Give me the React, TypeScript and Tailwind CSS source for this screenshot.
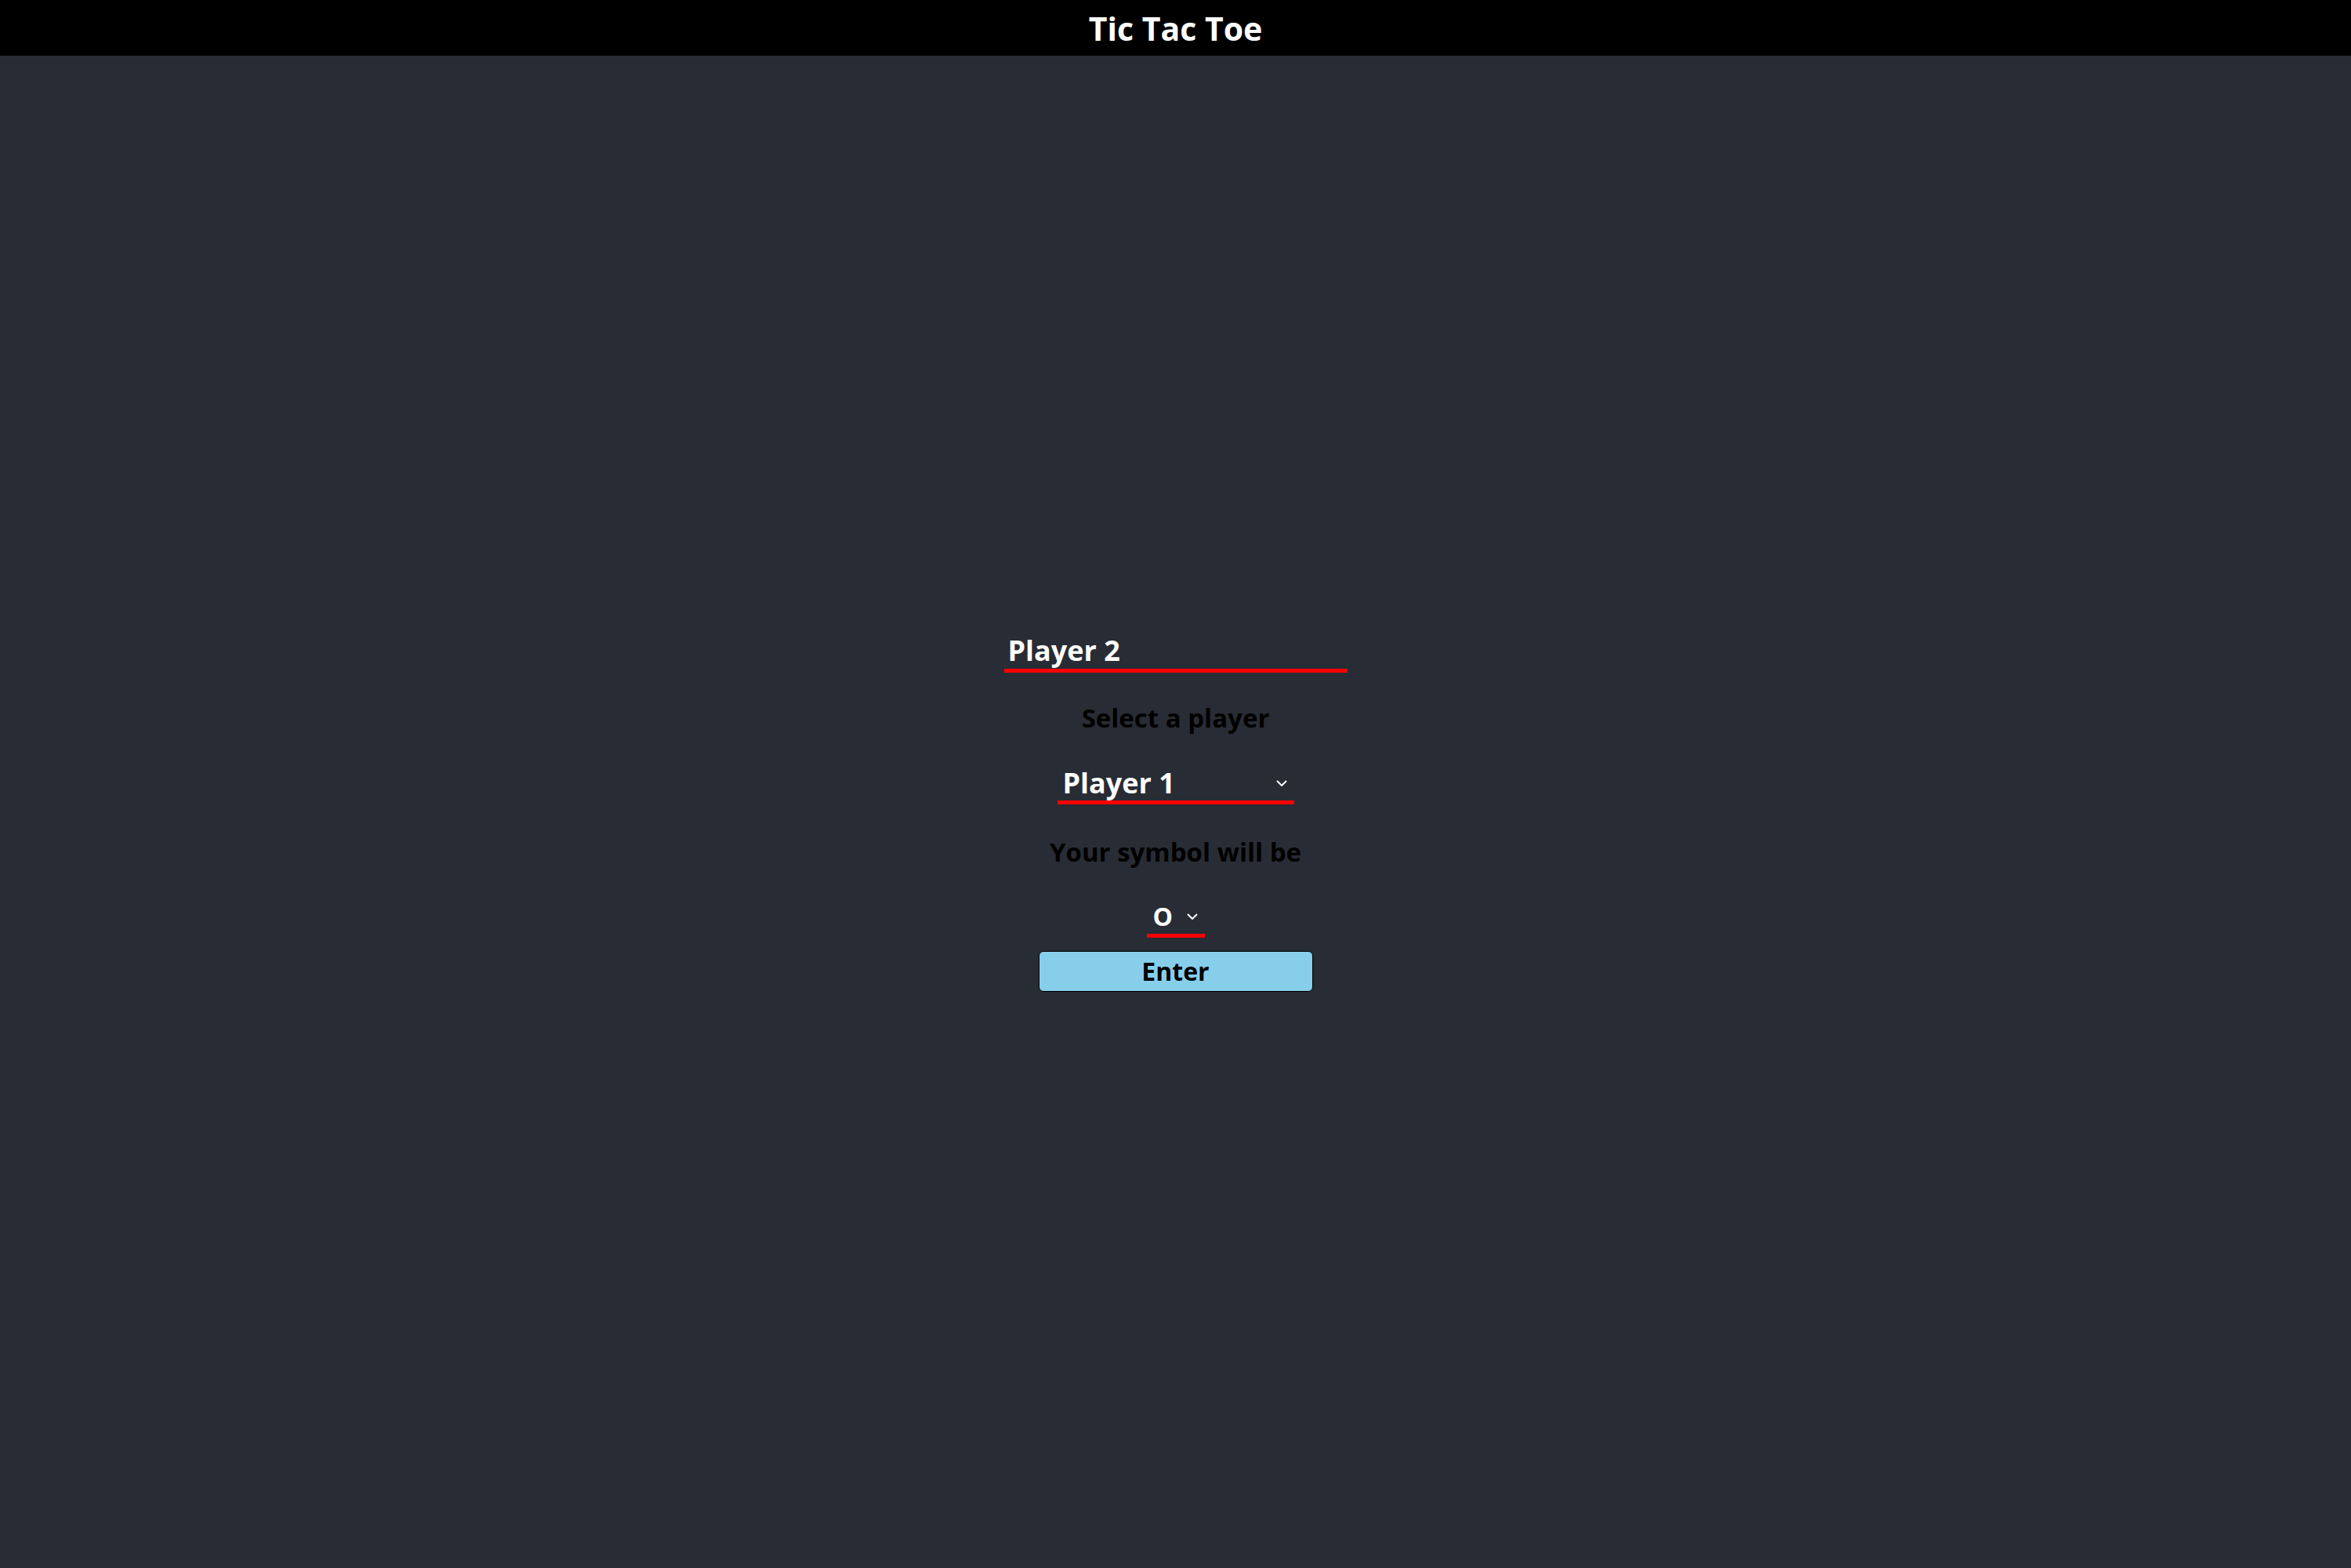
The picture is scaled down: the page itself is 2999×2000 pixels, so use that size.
import React, { useState } from "react";

const font = { fontFamily: '"Open Sans", "Noto Sans", sans-serif' };

const Chevron = () => (
  <svg
    viewBox="0 0 14 8"
    className="pointer-events-none absolute right-[9px] top-[19px] h-[8px] w-[14px]"
    fill="none"
    stroke="white"
    strokeWidth="2"
  >
    <path d="M1 1l6 6 6-6" />
  </svg>
);

export default function App() {
  const [name, setName] = useState("Player 2");
  const [player, setPlayer] = useState("Player 1");
  const [symbol, setSymbol] = useState("O");

  return (
    <div className="flex min-h-screen flex-col bg-[#282c34]" style={font}>
      {/* Header */}
      <header className="flex h-[71px] items-center justify-center bg-black">
        <h1 className="mt-[2px] text-[41px] font-bold leading-none text-white">Tic Tac Toe</h1>
      </header>

      {/* Form */}
      <main className="flex flex-1 flex-col items-center justify-center">
        <input
          value={name}
          onChange={(e) => setName(e.target.value)}
          className="h-[51px] w-[438px] border-0 border-b-[5px] border-solid border-b-[#ff0000] bg-transparent pl-[5px] text-[36px] font-bold leading-[46px] text-white outline-none"
        />

        <p className="mt-[35px] text-[33px] font-bold leading-[46px] text-black">Select a player</p>

        <div className="relative mt-[37px]">
          <select
            value={player}
            onChange={(e) => setPlayer(e.target.value)}
            className="h-[50px] w-[302px] appearance-none border-0 border-b-[5px] border-solid border-b-[#ff0000] bg-transparent pl-[7px] text-[36px] font-bold leading-[45px] text-white outline-none"
          >
            <option className="text-black">Player 1</option>
            <option className="text-black">Player 2</option>
          </select>
          <Chevron />
        </div>

        <p className="mt-[38px] text-[33px] font-bold leading-[46px] text-black">Your symbol will be</p>

        <div className="relative mt-[36px]">
          <select
            value={symbol}
            onChange={(e) => setSymbol(e.target.value)}
            className="h-[50px] w-[74px] appearance-none border-0 border-b-[5px] border-solid border-b-[#ff0000] bg-transparent pl-[8px] text-[32px] font-bold leading-[45px] text-white outline-none"
          >
            <option className="text-black">O</option>
            <option className="text-black">X</option>
          </select>
          <Chevron />
        </div>

        <button className="mt-[17px] h-[52px] w-[350px] rounded-[6px] border border-black bg-[#87ceeb] text-[32px] font-bold leading-none text-black">
          Enter
        </button>
      </main>
    </div>
  );
}
